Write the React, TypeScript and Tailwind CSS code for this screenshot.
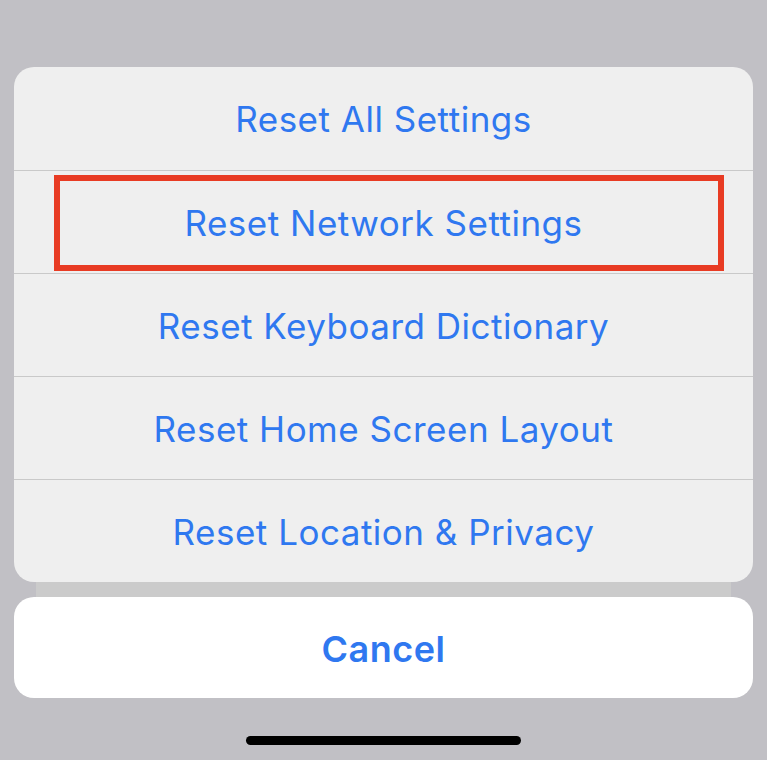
const options = [
  "Reset All Settings",
  "Reset Network Settings",
  "Reset Keyboard Dictionary",
  "Reset Home Screen Layout",
  "Reset Location & Privacy",
];

export default function App() {
  return (
    <div
      className="w-[767px] h-[760px] bg-[#c1c0c5] px-[14px] pt-[67px] overflow-hidden"
      style={{ fontFamily: "Inter, 'Noto Sans', sans-serif" }}
    >
      {/* Action sheet options */}
      <div className="rounded-[20px] bg-[#efefef] overflow-hidden">
        {options.map((label, i) => (
          <div
            key={label}
            className={`relative h-[103px] flex items-center justify-center pt-[2px] ${
              i > 0 ? "border-t border-[#c9c9c9]" : ""
            }`}
          >
            <span className="text-[35px] text-[#2f78f0] tracking-[0.5px]">{label}</span>
            {i === 1 && (
              <div className="absolute left-[40px] top-[4px] w-[670px] h-[96px] border-[6px] border-[#e83b23]" />
            )}
          </div>
        ))}
      </div>

      <div className="mx-[22px] h-[15px] bg-[#cbcbcb]" />

      {/* Cancel */}
      <div className="h-[101px] rounded-[20px] bg-white flex items-center justify-center pt-[2px]">
        <span className="text-[36px] font-semibold text-[#2f78f0] tracking-[0.5px]">Cancel</span>
      </div>

      {/* Home indicator */}
      <div className="mt-[38px] mx-auto w-[275px] h-[9px] rounded-full bg-black" />
    </div>
  );
}
